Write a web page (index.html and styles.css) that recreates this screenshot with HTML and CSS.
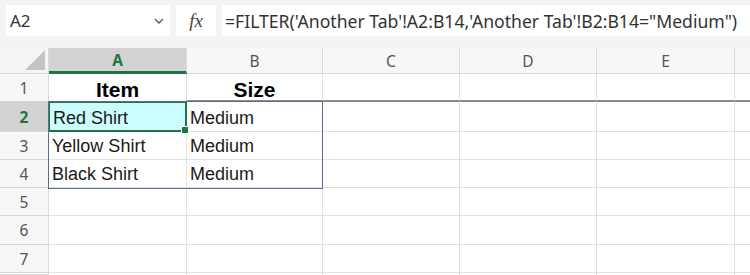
FILE: index.html
```html
<!DOCTYPE html>
<html>
<head>
<meta charset="utf-8">
<link rel="stylesheet" href="styles.css">
</head>
<body>
<div class="bar">
  <div class="namebox">
    <span class="name">A2</span>
    <svg class="chev" width="10" height="6" viewBox="0 0 10 6"><path d="M1 1 L5 5 L9 1" fill="none" stroke="#555" stroke-width="1.3"/></svg>
  </div>
  <div class="fxbox"><span class="fx">fx</span></div>
  <div class="formula">=FILTER('Another Tab'!A2:B14,'Another Tab'!B2:B14="Medium")</div>
</div>
<div class="sheet">
  <div class="corner"><svg width="20" height="20" viewBox="0 0 20 20"><path d="M20 0 L20 20 L0 20 Z" fill="#c4c4c4"/></svg></div>
  <div class="ch sel">A</div>
  <div class="ch">B</div>
  <div class="ch">C</div>
  <div class="ch">D</div>
  <div class="ch">E</div>
  <div class="ch last"></div>

  <div class="rh">1</div>
  <div class="c r1 hd colA">Item</div>
  <div class="c r1 hd">Size</div>
  <div class="c r1"></div>
  <div class="c r1"></div>
  <div class="c r1"></div>
  <div class="c r1 last"></div>

  <div class="rh selrow">2</div>
  <div class="c active">Red Shirt<span class="spill"></span><span class="handle"></span></div>
  <div class="c">Medium</div>
  <div class="c"></div>
  <div class="c"></div>
  <div class="c"></div>
  <div class="c last"></div>

  <div class="rh">3</div>
  <div class="c">Yellow Shirt</div>
  <div class="c">Medium</div>
  <div class="c"></div>
  <div class="c"></div>
  <div class="c"></div>
  <div class="c last"></div>

  <div class="rh">4</div>
  <div class="c">Black Shirt</div>
  <div class="c">Medium</div>
  <div class="c"></div>
  <div class="c"></div>
  <div class="c"></div>
  <div class="c last"></div>

  <div class="rh">5</div>
  <div class="c"></div><div class="c"></div><div class="c"></div><div class="c"></div><div class="c"></div><div class="c last"></div>
  <div class="rh">6</div>
  <div class="c"></div><div class="c"></div><div class="c"></div><div class="c"></div><div class="c"></div><div class="c last"></div>
  <div class="rh">7</div>
  <div class="c"></div><div class="c"></div><div class="c"></div><div class="c"></div><div class="c"></div><div class="c last"></div>
  <div class="rh"></div>
  <div class="c"></div><div class="c"></div><div class="c"></div><div class="c"></div><div class="c"></div><div class="c last"></div>
</div>
</body>
</html>
```
FILE: styles.css
```css
html, body {
  margin: 0;
  padding: 0;
  background: #ffffff;
  overflow: hidden;
}
body {
  width: 750px;
  height: 275px;
  font-family: "Liberation Sans", Arial, sans-serif;
}
.bar {
  height: 48px;
  background: #f3f3f3;
  display: flex;
  align-items: flex-start;
  padding: 5px 0 0 6px;
  box-sizing: border-box;
  gap: 6px;
}
.namebox, .fxbox, .formula {
  height: 31px;
  background: #ffffff;
  box-sizing: border-box;
  display: flex;
  align-items: center;
}
.namebox {
  width: 164px;
  padding: 0 0 0 4px;
  justify-content: space-between;
}
.name {
  font-family: "Noto Sans", "Open Sans", sans-serif;
  font-size: 17px;
  color: #333;
}
.chev { margin-right: 6px; }
.fxbox {
  width: 40px;
  justify-content: center;
}
.fx {
  font-family: "Liberation Serif", serif;
  font-style: italic;
  font-size: 19px;
  color: #444;
}
.formula {
  flex: 1;
  padding-left: 3px;
  font-family: "Noto Sans", "Open Sans", sans-serif;
  font-size: 17.6px;
  color: #333;
  white-space: nowrap;
  overflow: hidden;
}
.sheet {
  display: grid;
  grid-template-columns: 49px 138px 136px 137px 137px 138px 1fr;
  grid-template-rows: 26px 28px 30px 28px 28px 28px 29px 28px 2px;
  height: 227px;
  overflow: hidden;
}
.corner {
  background: #f5f5f5;
  border-right: 1px solid #d9d9d9;
  border-bottom: 1px solid #d9d9d9;
  display: flex;
  align-items: flex-end;
  justify-content: flex-end;
  padding: 0 3px 3px 0;
  box-sizing: border-box;
}
.ch {
  background: #f7f7f7;
  border-right: 1px solid #dadada;
  border-bottom: 1px solid #dadada;
  box-sizing: border-box;
  display: flex;
  align-items: center;
  justify-content: center;
  font-family: "Noto Sans", "Open Sans", sans-serif;
  font-size: 15.5px;
  color: #555;
}
.ch.sel {
  background: #d3d3d3;
  color: #217346;
  font-weight: bold;
  border-bottom: 3px solid #217346;
}
.ch.last, .c.last { border-right: none; }
.rh {
  background: #f7f7f7;
  border-right: 1px solid #dadada;
  border-bottom: 1px solid #dadada;
  box-sizing: border-box;
  display: flex;
  align-items: center;
  justify-content: center;
  font-family: "Noto Sans", "Open Sans", sans-serif;
  font-size: 15.5px;
  color: #555;
}
.rh.selrow {
  background: #d3d3d3;
  color: #217346;
  font-weight: bold;
}
.c {
  border-right: 1px solid #e1e1e1;
  border-bottom: 1px solid #e1e1e1;
  box-sizing: border-box;
  display: flex;
  align-items: flex-end;
  padding: 0 0 2px 3px;
  font-size: 18px;
  color: #1a1a1a;
  white-space: nowrap;
}
.c.r1 {
  border-bottom: 2px solid #8a8a8a;
}
.c.hd {
  justify-content: center;
  font-weight: bold;
  font-size: 21px;
  line-height: 1;
  color: #000;
  padding: 0;
}
.c.colA { border-bottom: 1px solid #e1e1e1; padding-bottom: 1px; }
.c.active {
  position: relative;
  background: #ccfdff;
  border: 2px solid #217346;
  margin: -1px 0 0 -1px;
  padding: 0 0 1px 3px;
}
.spill {
  position: absolute;
  left: -2px;
  top: -2px;
  width: 275px;
  height: 88px;
  border: 1px solid #5b6e8c;
  box-sizing: border-box;
  pointer-events: none;
}
.handle {
  position: absolute;
  right: -4px;
  bottom: -4px;
  width: 6px;
  height: 6px;
  background: #217346;
  border: 1px solid #ffffff;
}
```
